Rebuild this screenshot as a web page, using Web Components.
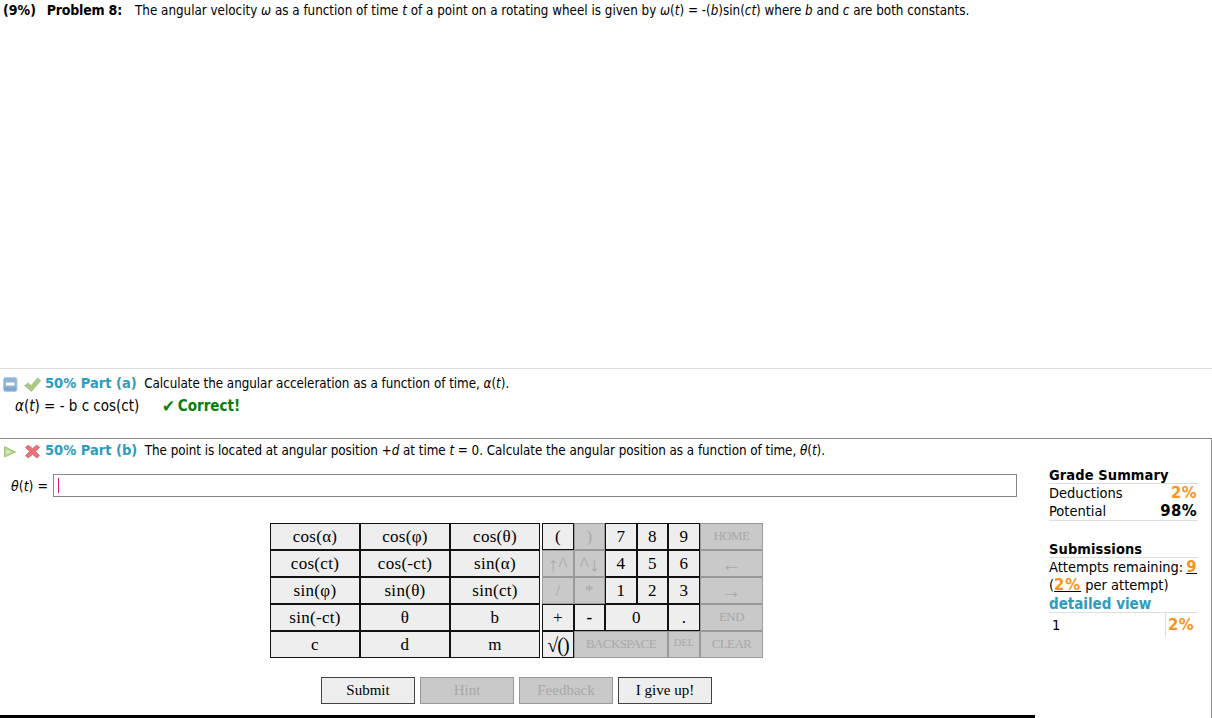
<!DOCTYPE html>
<html lang="en"><head><meta charset="utf-8"><title>Problem 8</title>
<style>
html,body{margin:0;padding:0;background:#fff}
body{font-family:"DejaVu Sans Condensed","DejaVu Sans",sans-serif;font-stretch:condensed;font-size:13.3px;color:#000;width:1212px;height:718px;overflow:hidden}
</style></head><body>
<problem-statement></problem-statement>
<part-a></part-a>
<part-b></part-b>
<script>
const shared=`i{font-style:italic}`;
function def(name,html,cb){customElements.define(name,class extends HTMLElement{constructor(){super();this.attachShadow({mode:'open'}).innerHTML=html}connectedCallback(){cb&&cb(this)}})}

def('problem-statement',`<style>${shared}
:host{display:block;height:369px;box-sizing:border-box;border-bottom:1px solid #ddd;padding:2px 0 0 3px;line-height:16px;white-space:nowrap}
b{font-weight:700;font-size:14px}.n{margin-right:7px}.p{letter-spacing:-.2px}.t{margin-left:13px}</style>
<b class="n">(9%)</b> <b class="p">Problem 8:</b><span class="t">The angular velocity <i>ω</i> as a function of time <i>t</i> of a point on a rotating wheel is given by <i>ω</i>(<i>t</i>) = -(<i>b</i>)sin(<i>ct</i>) where <i>b</i> and <i>c</i> are both constants.</span>`);

def('status-icon',`<style>:host{display:inline-flex;flex:none;align-self:center;margin-top:4px}svg{display:block}</style><svg width="17" height="16" viewBox="0 0 17 16"></svg>`,el=>{
 const p={minus:'<rect x="0.5" y="0.5" width="13.5" height="14" rx="2" fill="#8fb4d6" stroke="#b2cbe3"/><rect x="3" y="5.5" width="8.5" height="3" fill="#fff"/><rect x="1.5" y="10.5" width="11.5" height="3" fill="#7aa5cc"/>',
 check:'<path d="M0.5 8.5 L4 6 L7 8.5 L13.5 1 L16.8 3.5 L7.5 14.5 Z" fill="#a9ca86" stroke="#93b573" stroke-width=".6" stroke-linejoin="round"/>',
 play:'<path d="M1.5 2.5 L12.5 8 L1.5 13 Z" fill="#b7d592" stroke="#a4c47c" stroke-width="1" stroke-linejoin="round"/><path d="M3.5 5.5 L8.5 8 L3.5 10.5 Z" fill="#dcebc7"/>',
 cross:'<path d="M1.5 3.5 L4 1 L8.5 4.5 L13 1 L15.5 3.5 L11.5 7.5 L15.5 11.5 L13 14 L8.5 10.5 L4 14 L1.5 11.5 L5.5 7.5 Z" fill="#e8727a" stroke="#dc7a80" stroke-width="1" stroke-linejoin="round"/>'};
 el.shadowRoot.querySelector('svg').innerHTML=p[el.getAttribute('name')];
});

def('part-title',`<style>:host{display:flex;align-items:baseline;height:16px;line-height:16px;white-space:nowrap;letter-spacing:-.03px}
.pct{font-weight:700;color:#2f9bbd;margin-right:7.5px;font-size:14.5px;letter-spacing:0}</style><span class="pct"><slot name="label"></slot></span><span><slot></slot></span>`);

def('part-a',`<style>${shared}
:host{display:block;height:69px;box-sizing:border-box;padding:5px 0 0 3px}
.h{display:flex;align-items:center;height:18px}status-icon+status-icon{margin-left:4px;margin-right:4px}
.ans{margin:6px 0 0 12px;line-height:16px;white-space:nowrap;display:flex;font-size:15px}
.ans>span:first-child{width:125px}
.ok{color:#0a7d0a;font-weight:700;margin-left:22px;font-size:15px;display:flex;align-items:center}
.ck{font-size:17px;margin-right:3px;font-weight:400}</style>
<div class="h"><status-icon name="minus"></status-icon><status-icon name="check"></status-icon>
<part-title><span slot="label">50% Part (a)</span>Calculate the angular acceleration as a function of time,&nbsp;<i>α</i>(<i>t</i>).</part-title></div>
<div class="ans"><span><i>α</i>(<i>t</i>) = - b c cos(ct)</span><span class="ok"><span class="ck">✔</span>Correct!</span></div>`);

def('part-b',`<style>${shared}
:host{display:flex;height:280px;width:1212px;box-sizing:border-box;border-top:1px solid #888;border-right:1px solid #888;}
.main{width:1035px;box-sizing:border-box;flex:none;border-bottom:3px solid #000;height:279px;padding:2px 0 0 3px}
.h{display:flex;align-items:center;height:18px}status-icon+status-icon{margin-left:4px;margin-right:4px}
.inp{display:flex;align-items:center;margin:15px 0 0 8px;white-space:nowrap}
.inp>span{width:42px;flex:none;font-size:14px;padding-top:1px}
.box{width:964px;height:23px;box-sizing:border-box;border:1px solid #888;display:flex;align-items:center;padding-left:4px;flex:none}
.caret{width:1px;height:15px;background:#e6195a}
key-pad{margin:26px 0 0 267px}
.btns{display:flex;gap:5px;margin:19px 0 0 318px}
grade-panel{margin:28px 0 0 14px}</style>
<div class="main"><div class="h"><status-icon name="play"></status-icon><status-icon name="cross"></status-icon>
<part-title><span slot="label">50% Part (b)</span>The point is located at angular position +<i>d</i> at time <i>t</i> = 0. Calculate the angular position as a function of time,&nbsp;<i>θ</i>(<i>t</i>).</part-title></div>
<div class="inp"><span><i>θ</i>(<i>t</i>) =</span><div class="box"><div class="caret"></div></div></div>
<key-pad></key-pad>
<div class="btns"><action-btn>Submit</action-btn><action-btn off>Hint</action-btn><action-btn off>Feedback</action-btn><action-btn>I give up!</action-btn></div></div>
<grade-panel></grade-panel>`);

def('key-cap',`<style>:host{display:flex;align-items:center;justify-content:center;box-sizing:border-box;border:1px solid #111;background:#eee;font:17px/1 "Liberation Serif",serif;letter-spacing:.3px;color:#000;white-space:nowrap;overflow:hidden}
:host([off]){background:#c9c9c9;border-color:#999;color:#a8a8a8}
:host([small]){font-size:13px;letter-spacing:-.6px;padding-bottom:2px}:host([tiny]){font-size:10.5px;letter-spacing:0;padding-bottom:2px}</style><slot></slot>`);

def('key-pad',`<style>:host{display:grid;width:493px;grid-template-columns:90px 90px 90px 2px 32px 31px 32px 31px 32px 63px;grid-auto-rows:27px}
.gap{grid-column:4;grid-row:1/6}.w2{grid-column:span 2}.w3{grid-column:span 3}
.bold{font-weight:700}.sq{font-size:20px;letter-spacing:-1px}.arr{font-size:20px}</style>
<key-cap>cos(α)</key-cap><key-cap>cos(φ)</key-cap><key-cap>cos(θ)</key-cap><span class="gap"></span><key-cap>(</key-cap><key-cap off>)</key-cap><key-cap>7</key-cap><key-cap>8</key-cap><key-cap>9</key-cap><key-cap off small>HOME</key-cap>
<key-cap>cos(ct)</key-cap><key-cap>cos(-ct)</key-cap><key-cap>sin(α)</key-cap><key-cap off class="arr">↑^</key-cap><key-cap off class="arr">^↓</key-cap><key-cap>4</key-cap><key-cap>5</key-cap><key-cap>6</key-cap><key-cap off class="arr">←</key-cap>
<key-cap>sin(φ)</key-cap><key-cap>sin(θ)</key-cap><key-cap>sin(ct)</key-cap><key-cap off>/</key-cap><key-cap off>*</key-cap><key-cap>1</key-cap><key-cap>2</key-cap><key-cap>3</key-cap><key-cap off class="arr">→</key-cap>
<key-cap>sin(-ct)</key-cap><key-cap>θ</key-cap><key-cap>b</key-cap><key-cap>+</key-cap><key-cap class="bold">-</key-cap><key-cap class="w2">0</key-cap><key-cap>.</key-cap><key-cap off small>END</key-cap>
<key-cap>c</key-cap><key-cap>d</key-cap><key-cap>m</key-cap><key-cap class="sq">√()</key-cap><key-cap off small class="w3">BACKSPACE</key-cap><key-cap off tiny>DEL</key-cap><key-cap off small>CLEAR</key-cap>`);

def('action-btn',`<style>:host{display:flex;width:94px;height:27px;box-sizing:border-box;align-items:center;justify-content:center;border:1px solid #444;background:#eee;font:15px "Liberation Serif",serif;color:#000}
:host([off]){background:#c9c9c9;border-color:#999;color:#a8a8a8}</style><slot></slot>`);

def('grade-panel',`<style>:host{display:block;width:149px;line-height:18px;white-space:nowrap;color:#000;font-size:14.5px}
h4{margin:0;font-size:14.5px;font-weight:700;border-bottom:1px solid #ddd;line-height:16px;letter-spacing:.1px}
.r{display:flex;justify-content:space-between;align-items:baseline;padding-right:1px;height:18px}
.b{font-weight:700;font-size:16.5px;letter-spacing:.4px}.o{color:#f7931e;font-weight:700;font-size:16.5px;letter-spacing:.4px}
.p{border-bottom:1px solid #ddd}
h4.s{margin-top:20px}
u{text-decoration-color:#000}
.l{height:18px}.l .o{letter-spacing:.9px}
.v{color:#2f9bbd;font-weight:700;border-bottom:1px solid #ddd;font-size:15px;height:17px;padding-top:1px}
.t{display:flex;height:24px;line-height:24px}.t span:first-child{flex:1;padding-left:3px}.t span:last-child{border-left:1px solid #ddd;width:33px;padding-left:2px;box-sizing:border-box}
</style>
<h4>Grade Summary</h4>
<div class="r"><span>Deductions</span><span class="o">2%</span></div>
<div class="r p"><span>Potential</span><span class="b">98%</span></div>
<h4 class="s">Submissions</h4>
<div class="r"><span>Attempts remaining:</span><u class="o">9</u></div>
<div class="l">(<u class="o">2%</u> per attempt)</div>
<div class="v">detailed view</div>
<div class="t"><span>1</span><span class="o">2%</span></div>`);
</script>
</body></html>
